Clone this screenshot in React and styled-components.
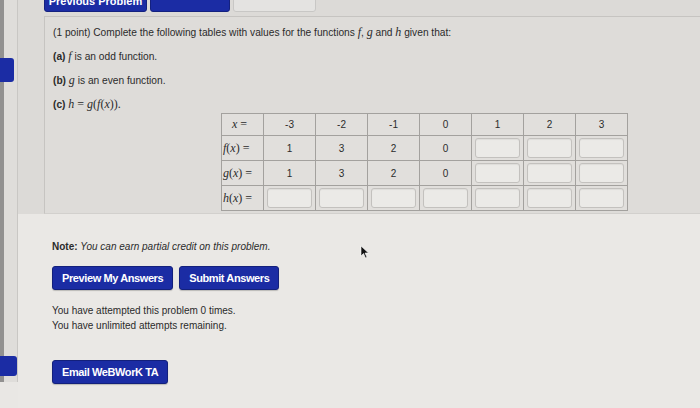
import React from 'react';
import styled, { createGlobalStyle } from 'styled-components';

const GlobalStyle = createGlobalStyle`
  html, body {
    margin: 0;
    padding: 0;
    width: 700px;
    height: 408px;
    overflow: hidden;
    background: #e9e7e4;
  }
  body {
    font-family: "Liberation Sans", Arial, sans-serif;
    color: #2b2b2b;
  }
`;

const Page = styled.div`
  position: relative;
  display: flex;
  width: 700px;
  height: 408px;
  overflow: hidden;
`;

const Sidebar = styled.div`
  flex: 0 0 11px;
  border-left: 4px solid #929190;
  border-right: 1px solid #c9c7c4;
  background: #dfddda;
  display: flex;
  flex-direction: column;
  padding-top: 58px;
  margin-bottom: 26px;
`;

const SideTab = styled.div`
  width: ${(p) => p.$w}px;
  height: ${(p) => p.$h}px;
  margin-left: -4px;
  margin-top: ${(p) => p.$top}px;
  background: #1b2ca4;
  border-radius: 0 3px 3px 0;
`;

const Main = styled.div`
  flex: 1;
  min-width: 0;
  padding-left: 26px;
  display: flex;
  flex-direction: column;
  background: linear-gradient(#dcdad7 0, #dcdad7 214px, #eae8e5 214px);
`;

const NavRow = styled.div`
  height: 12px;
  overflow: hidden;
  display: flex;
  align-items: flex-end;
  gap: 3px;
`;

const NavButton = styled.div`
  width: ${(p) => p.$w}px;
  height: 24px;
  flex: 0 0 auto;
  border-radius: 3px;
  background: ${(p) => (p.$light ? '#e4e3e1' : '#1b2ca4')};
  border: 1px solid ${(p) => (p.$light ? '#c8c7c5' : '#14217f')};
  color: #fff;
  font-size: 11px;
  font-weight: bold;
  display: flex;
  align-items: flex-start;
  justify-content: center;
  padding-top: 6px;
  box-sizing: border-box;
`;

const Panel = styled.div`
  margin-top: 4px;
  height: 198px;
  background: #dedcd9;
  border-top: 1px solid #c6c4c1;
  border-left: 1px solid #c6c4c1;
  border-bottom: 1px solid #d2d0cd;
  padding: 9px 0 0 8px;
  box-sizing: border-box;
  font-size: 10.2px;
`;

const Line = styled.p`
  margin: 0 0 10px;
  height: 14px;
  line-height: 14px;
  white-space: nowrap;
`;

const Math = styled.span`
  font-family: "Liberation Serif", "Times New Roman", serif;
  font-size: 12px;
  line-height: 1;
`;

const V = styled.i`
  font-family: "Liberation Serif", "Times New Roman", serif;
  font-style: italic;
`;

const Table = styled.table`
  margin: -9px 0 0 168px;
  border-collapse: collapse;
  background: #e1dfdc;
  font-size: 10px;
`;

const Cell = styled.td`
  border: 1px solid #a3a19e;
  width: ${(p) => (p.$label ? 41 : 51)}px;
  height: ${(p) => (p.$head ? 21 : 24)}px;
  padding: 0;
  text-align: ${(p) => (p.$label ? 'left' : 'center')};
  vertical-align: middle;
`;

const LabelText = styled.span`
  font-family: "Liberation Serif", "Times New Roman", serif;
  font-size: 12px;
  padding-left: ${(p) => (p.$pad ? 10 : 1)}px;
`;

const AnswerBox = styled.div`
  width: 43px;
  height: 18px;
  margin: 0 auto;
  border: 1px solid #c3c1be;
  border-radius: 3px;
  background: #ebeae7;
  box-shadow: inset 0 1px 1px rgba(0, 0, 0, 0.06);
`;

const Lower = styled.div`
  padding: 26px 0 0 8px;
  font-size: 10px;
`;

const Note = styled.p`
  margin: 0;
  line-height: 14px;
`;

const ButtonRow = styled.div`
  display: flex;
  gap: 6px;
  margin-top: 12px;
`;

const BlueButton = styled.button`
  height: 24px;
  padding: 0 9px;
  border: 1px solid #13207c;
  border-radius: 3px;
  background: #1b2ca4;
  color: #fff;
  font-family: "Liberation Sans", Arial, sans-serif;
  font-size: 11px;
  font-weight: bold;
  letter-spacing: -0.4px;
  box-shadow: 0 1px 1px rgba(0, 0, 0, 0.2);
`;

const Attempts = styled.div`
  margin-top: 13px;
  line-height: 15px;
`;

const EmailRow = styled.div`
  margin-top: 27px;
`;

const Cursor = styled.svg`
  position: absolute;
  left: 360px;
  top: 245px;
`;

const xs = ['-3', '-2', '-1', '0', '1', '2', '3'];
const fVals = ['1', '3', '2', '0', null, null, null];
const gVals = ['1', '3', '2', '0', null, null, null];
const hVals = [null, null, null, null, null, null, null];

const rows = [
  { name: 'f', vals: fVals },
  { name: 'g', vals: gVals },
  { name: 'h', vals: hVals },
];

export default function App() {
  return (
    <>
      <GlobalStyle />
      <Page>
        <Sidebar>
          <SideTab $w={14} $h={24} $top={0} />
          <SideTab $w={17} $h={20} $top={274} />
        </Sidebar>
        <Main>
          <NavRow>
            <NavButton $w={103}>Previous Problem</NavButton>
            <NavButton $w={80} />
            <NavButton $w={83} $light />
          </NavRow>
          <Panel>
            <Line>
              (1 point) Complete the following tables with values for the functions{' '}
              <Math><V>f</V></Math>, <Math><V>g</V></Math> and <Math><V>h</V></Math> given that:
            </Line>
            <Line>
              <b>(a)</b> <Math><V>f</V></Math> is an odd function.
            </Line>
            <Line>
              <b>(b)</b> <Math><V>g</V></Math> is an even function.
            </Line>
            <Line>
              <b>(c)</b> <Math><V>h</V> = <V>g</V>(<V>f</V>(<V>x</V>)).</Math>
            </Line>
            <Table>
              <tbody>
                <tr>
                  <Cell $label $head>
                    <LabelText $pad><V>x</V> =</LabelText>
                  </Cell>
                  {xs.map((x) => (
                    <Cell key={x} $head>{x}</Cell>
                  ))}
                </tr>
                {rows.map((r) => (
                  <tr key={r.name}>
                    <Cell $label>
                      <LabelText><V>{r.name}</V>(<V>x</V>) =</LabelText>
                    </Cell>
                    {r.vals.map((v, i) => (
                      <Cell key={i}>{v === null ? <AnswerBox /> : v}</Cell>
                    ))}
                  </tr>
                ))}
              </tbody>
            </Table>
          </Panel>
          <Lower>
            <Note>
              <b>Note:</b> <i>You can earn partial credit on this problem.</i>
            </Note>
            <ButtonRow>
              <BlueButton>Preview My Answers</BlueButton>
              <BlueButton>Submit Answers</BlueButton>
            </ButtonRow>
            <Attempts>
              You have attempted this problem 0 times.
              <br />
              You have unlimited attempts remaining.
            </Attempts>
            <EmailRow>
              <BlueButton>Email WeBWorK TA</BlueButton>
            </EmailRow>
          </Lower>
        </Main>
        <Cursor width="10" height="14" viewBox="0 0 10 14">
          <path d="M1 1 L1 11 L3.5 8.5 L5.5 13 L7 12.3 L5 8 L8.5 8 Z" fill="#111" stroke="#fff" strokeWidth="0.6" />
        </Cursor>
      </Page>
    </>
  );
}
